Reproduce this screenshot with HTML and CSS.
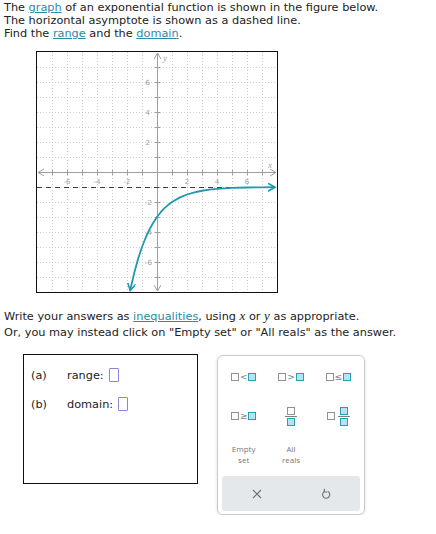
FILE: index.html
```html
<!DOCTYPE html>
<html>
<head>
<meta charset="utf-8">
<link rel="stylesheet" href="styles.css">
</head>
<body>
<div class="intro">
  <div>The <a class="lnk">graph</a> of an exponential function is shown in the figure below.</div>
  <div>The horizontal asymptote is shown as a dashed line.</div>
  <div>Find the <a class="lnk">range</a> and the <a class="lnk">domain</a>.</div>
</div>

<div class="graph">
<svg width="240" height="240" viewBox="0 0 240 240" xmlns="http://www.w3.org/2000/svg">
  <defs>
    <marker id="ga" markerWidth="8" markerHeight="8" refX="6" refY="3.5" orient="auto-start-reverse" markerUnits="userSpaceOnUse">
      <path d="M0,0 L6,3.5 L0,7" fill="none" stroke="#9aa0a3" stroke-width="1"/>
    </marker>
    <marker id="ta" markerWidth="9" markerHeight="9" refX="7" refY="4" orient="auto-start-reverse" markerUnits="userSpaceOnUse">
      <path d="M0,0 L7,4 L0,8" fill="none" stroke="#1f9aac" stroke-width="1.6"/>
    </marker>
  </defs>
  <g stroke="#c9cdd0" stroke-width="1" stroke-dasharray="1,2">
    <path d="M15.5,0V240M30.5,0V240M45.5,0V240M60.5,0V240M75.5,0V240M90.5,0V240M105.5,0V240M135.5,0V240M150.5,0V240M165.5,0V240M180.5,0V240M195.5,0V240M210.5,0V240M225.5,0V240"/>
    <path d="M0,15.5H240M0,30.5H240M0,45.5H240M0,60.5H240M0,75.5H240M0,90.5H240M0,105.5H240M0,135.5H240M0,150.5H240M0,165.5H240M0,180.5H240M0,195.5H240M0,210.5H240M0,225.5H240"/>
  </g>
  <g stroke="#9aa0a3" stroke-width="1" fill="none">
    <line x1="1" y1="120.5" x2="239" y2="120.5" marker-start="url(#ga)" marker-end="url(#ga)"/>
    <line x1="120.5" y1="1" x2="120.5" y2="239" marker-start="url(#ga)" marker-end="url(#ga)"/>
    <path d="M15.5,118V123M30.5,118V123M45.5,118V123M60.5,118V123M75.5,118V123M90.5,118V123M105.5,118V123M135.5,118V123M150.5,118V123M165.5,118V123M180.5,118V123M195.5,118V123M210.5,118V123M225.5,118V123"/>
    <path d="M118,15.5H123M118,30.5H123M118,45.5H123M118,60.5H123M118,75.5H123M118,90.5H123M118,105.5H123M118,135.5H123M118,150.5H123M118,165.5H123M118,180.5H123M118,195.5H123M118,210.5H123M118,225.5H123"/>
  </g>
  <g class="tick" fill="#9aa0a3" font-size="7" text-anchor="middle">
    <text x="30" y="132">-6</text>
    <text x="60" y="132">-4</text>
    <text x="90" y="132">-2</text>
    <text x="150" y="132">2</text>
    <text x="180" y="132">4</text>
    <text x="210" y="132">6</text>
    <text x="113" y="33" text-anchor="end">6</text>
    <text x="113" y="63" text-anchor="end">4</text>
    <text x="113" y="93" text-anchor="end">2</text>
    <text x="115" y="153" text-anchor="end">-2</text>
    <text x="115" y="183" text-anchor="end">-4</text>
    <text x="115" y="213" text-anchor="end">-6</text>
  </g>
  <g class="axl" fill="#9aa0a3" font-size="9" font-style="italic">
    <text x="126" y="9">y</text>
    <text x="231" y="116">x</text>
  </g>
  <line x1="0" y1="135.5" x2="236" y2="135.5" stroke="#3c3f42" stroke-width="1" stroke-dasharray="5,4"/>
  <polyline fill="none" stroke="#1f9aac" stroke-width="1.8" stroke-linejoin="round"
    marker-start="url(#ta)" marker-end="url(#ta)"
    points="93.2,238.5 93.75,235.9 97.5,219.9 101.25,206.3 105,195 108.75,185.5 112.5,177.4 116.25,170.7 120,165 123.75,160.2 127.5,156.2 131.25,152.8 135,150 142.5,145.6 150,142.5 157.5,140.3 165,138.75 172.5,137.65 180,136.9 195,135.9 210,135.5 225,135.3 238,135.2"/>
</svg>
</div>

<div class="instr">
  <div>Write your answers as <a class="lnk">inequalities</a>, using <span class="var">x</span> or <span class="var">y</span> as appropriate.</div>
  <div>Or, you may instead click on "Empty set" or "All reals" as the answer.</div>
</div>

<div class="work">
  <div class="answers">
    <div class="arow"><span class="lab">(a)</span><span class="name">range:</span><span class="inp"></span></div>
    <div class="arow"><span class="lab">(b)</span><span class="name">domain:</span><span class="inp"></span></div>
  </div>

  <div class="pad">
    <div class="keys">
      <div class="key"><span class="sq"></span><span class="op">&lt;</span><span class="sq t"></span></div>
      <div class="key"><span class="sq"></span><span class="op">&gt;</span><span class="sq t"></span></div>
      <div class="key"><span class="sq"></span><span class="op">≤</span><span class="sq t"></span></div>
      <div class="key"><span class="sq"></span><span class="op">≥</span><span class="sq t"></span></div>
      <div class="key"><span class="frac"><span class="sq"></span><span class="bar"></span><span class="sq t"></span></span></div>
      <div class="key"><span class="sq"></span><span class="frac mix"><span class="sq t"></span><span class="bar"></span><span class="sq t"></span></span></div>
      <div class="key txt">Empty<br>set</div>
      <div class="key txt">All<br>reals</div>
      <div class="key txt"></div>
    </div>
    <div class="tools">
      <div class="tool">
        <svg width="10" height="10" viewBox="0 0 10 10"><path d="M1,1L9,9M9,1L1,9" stroke="#6b7074" stroke-width="1.1" fill="none"/></svg>
      </div>
      <div class="tool">
        <svg width="10" height="12" viewBox="0 0 10 12"><path d="M3.2,3.6 A3.6,3.6 0 1 0 6.6,3.3" stroke="#6b7074" stroke-width="1.1" fill="none"/><path d="M3.4,0.8 L3.2,3.7 L6,4.2" stroke="#6b7074" stroke-width="1.1" fill="none"/></svg>
      </div>
    </div>
  </div>
</div>
</body>
</html>
```

FILE: styles.css
```css
html, body {
  margin: 0;
  padding: 0;
  background: #ffffff;
}
body {
  font-family: "DejaVu Sans", Verdana, sans-serif;
  font-size: 11.3px;
  color: #222;
  padding: 1px 4px 0 4px;
}
.intro {
  line-height: 13px;
}
.lnk {
  color: #2a8ca3;
  text-decoration: underline;
}
.graph {
  margin: 11px 0 0 32px;
  width: 240px;
  height: 240px;
  border: 1px solid #111;
}
.graph svg {
  display: block;
}
.tick text {
  font-family: "DejaVu Sans", sans-serif;
}
.axl text {
  font-family: "Liberation Serif", serif;
}
.instr {
  margin-top: 15px;
  line-height: 16px;
}
.var {
  font-family: "Liberation Serif", serif;
  font-style: italic;
  font-size: 13px;
}
.work {
  display: flex;
  align-items: flex-start;
  gap: 19px;
  margin: 13px 0 0 19px;
}
.answers {
  width: 173px;
  height: 116px;
  border: 1px solid #111;
  padding-top: 12px;
}
.arow {
  display: flex;
  align-items: center;
  height: 16px;
  margin-bottom: 13px;
}
.lab {
  width: 36px;
  padding-left: 7px;
}
.name {
  margin-right: 5px;
}
.inp {
  display: inline-block;
  width: 8px;
  height: 12px;
  border: 1px solid #8a86e0;
  border-radius: 1px;
}
.pad {
  margin-top: 1px;
  width: 146px;
  height: 158px;
  border: 1px solid #c9cccf;
  border-radius: 6px;
  box-shadow: 0 1px 3px rgba(0,0,0,0.15);
  display: flex;
  flex-direction: column;
  font-family: "Open Sans", "DejaVu Sans", sans-serif;
}
.keys {
  display: grid;
  grid-template-columns: repeat(3, 1fr);
  grid-template-rows: 42px 36px 42px;
  padding: 0 2px;
}
.key {
  display: flex;
  align-items: center;
  justify-content: center;
  gap: 1px;
}
.sq {
  display: inline-block;
  width: 6px;
  height: 6px;
  border: 1px solid #8e9296;
  background: #fff;
}
.sq.t {
  border-color: #2a9fb3;
  background: #b5e3ee;
}
.op {
  color: #7b8084;
  font-size: 9px;
  line-height: 8px;
  font-family: "DejaVu Sans", sans-serif;
}
.frac {
  display: inline-flex;
  flex-direction: column;
  align-items: center;
  gap: 1px;
}
.frac .bar {
  width: 12px;
  height: 1px;
  background: #7b8084;
}
.frac.mix {
  margin-left: 2px;
}
.key.txt {
  flex-direction: column;
  font-size: 8px;
  line-height: 11px;
  color: #75797d;
  text-align: center;
  padding-top: 9px;
  justify-content: flex-start;
}
.tools {
  margin: 0 4px;
  height: 35px;
  background: #e4e8ea;
  border-radius: 3px;
  display: flex;
}
.tool {
  flex: 1;
  display: flex;
  align-items: center;
  justify-content: center;
}
.tool svg {
  display: block;
}
```
